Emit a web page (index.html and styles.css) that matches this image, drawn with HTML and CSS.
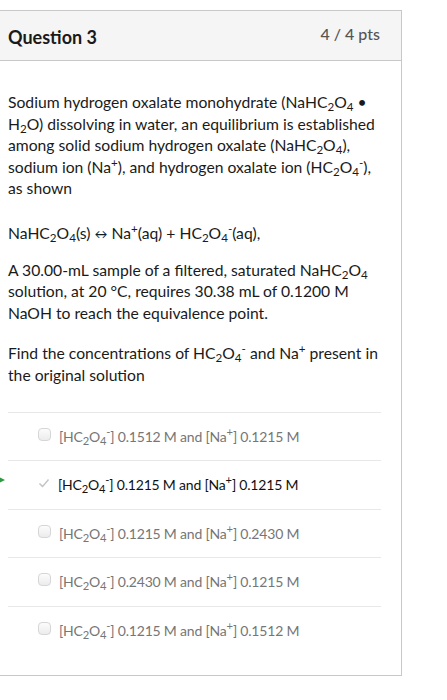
FILE: index.html
```html
<!DOCTYPE html>
<html>
<head>
<meta charset="utf-8">
<link rel="stylesheet" href="styles.css">
</head>
<body>
<div class="card">
  <div class="card-header">
    <span class="q-title">Question 3</span>
    <span class="q-pts">4 / 4 pts</span>
  </div>
  <div class="card-body">
    <p class="p-first">Sodium hydrogen oxalate monohydrate (NaHC<sub>2</sub>O<sub>4</sub> • H<sub>2</sub>O) dissolving in water, an equilibrium is established among solid sodium hydrogen oxalate (NaHC<sub>2</sub>O<sub>4</sub>), sodium ion (Na<sup>+</sup>), and hydrogen oxalate ion (HC<sub>2</sub>O<sub>4</sub><sup>-</sup>), as shown</p>
    <p class="p-eq">NaHC<sub>2</sub>O<sub>4</sub>(s) <span class="arrow">↔</span> Na<sup>+</sup>(aq) + HC<sub>2</sub>O<sub>4</sub><sup>-</sup>(aq),</p>
    <p class="p-mid">A 30.00-mL sample of a filtered, saturated NaHC<sub>2</sub>O<sub>4</sub> solution, at 20 °C, requires 30.38 mL of 0.1200 M NaOH to reach the equivalence point.</p>
    <p class="p-last">Find the concentrations of HC<sub>2</sub>O<sub>4</sub><sup>-</sup> and Na<sup>+</sup> present in the original solution</p>
    <ul class="answers">
      <li class="answer"><span class="radio"></span><span class="a-text">[HC<sub>2</sub>O<sub>4</sub><sup>-</sup>] 0.1512 M and [Na<sup>+</sup>] 0.1215 M</span></li>
      <li class="answer selected"><span class="correct-arrow"></span><span class="check"><svg width="12" height="12" viewBox="0 0 12 12"><path d="M1.5 6.5 L4.5 9.5 L10.5 2.5" fill="none" stroke="#c4c4c4" stroke-width="1.6" stroke-linejoin="round"/><path d="M3 6.2 L4.6 7.8 L9.2 2.6" fill="none" stroke="#fff" stroke-width="0.6"/></svg></span><span class="a-text">[HC<sub>2</sub>O<sub>4</sub><sup>-</sup>] 0.1215 M and [Na<sup>+</sup>] 0.1215 M</span></li>
      <li class="answer"><span class="radio"></span><span class="a-text">[HC<sub>2</sub>O<sub>4</sub><sup>-</sup>] 0.1215 M and [Na<sup>+</sup>] 0.2430 M</span></li>
      <li class="answer"><span class="radio"></span><span class="a-text">[HC<sub>2</sub>O<sub>4</sub><sup>-</sup>] 0.2430 M and [Na<sup>+</sup>] 0.1215 M</span></li>
      <li class="answer"><span class="radio"></span><span class="a-text">[HC<sub>2</sub>O<sub>4</sub><sup>-</sup>] 0.1215 M and [Na<sup>+</sup>] 0.1512 M</span></li>
    </ul>
  </div>
</div>
</body>
</html>
```

FILE: styles.css
```css
html, body {
  margin: 0;
  padding: 0;
  background: #fff;
}
body {
  font-family: Lato, "Open Sans", sans-serif;
  color: #2d3b45;
  padding-top: 10px;
}
.card {
  width: 402px;
  border: 1px solid #c8c8c8;
  border-left: none;
  position: relative;
  box-sizing: border-box;
}
.card-header {
  height: 50px;
  background: #f5f5f5;
  border-bottom: 1px solid #c8c8c8;
  display: flex;
  justify-content: space-between;
  align-items: center;
  padding: 0 21px 0 8px;
  box-sizing: border-box;
}
.q-title {
  font-size: 18px;
  font-weight: 700;
  color: #1a1a1a;
  margin-top: 3px;
}
.q-pts {
  font-size: 16px;
  font-weight: 500;
  color: #555;
  margin-top: -5px;
}
.card-body {
  padding: 31px 13px 21px 8px;
}
p {
  margin: 0 0 16px 0;
  font-size: 15.7px;
  line-height: 21.6px;
  color: #1a1a1a;
}
.p-first {
  margin-bottom: 23px;
}
.p-eq {
  margin-bottom: 14px;
}
.p-mid {
  margin-bottom: 19px;
}
.p-last {
  margin-bottom: 25px;
}
sub, sup {
  font-size: 0.74em;
  line-height: 0;
}
sub {
  vertical-align: -0.22em;
}
sup {
  vertical-align: 0.5em;
}
.arrow {
  font-size: 13px;
}
.answers {
  list-style: none;
  margin: 0;
  padding: 0;
  width: 373px;
}
.answer {
  height: 48.5px;
  border-top: 1px solid #e8e8e8;
  display: flex;
  align-items: center;
  padding-left: 30px;
  position: relative;
  font-size: 14px;
  color: #767676;
  letter-spacing: -0.2px;
  box-sizing: border-box;
}
.answer sup {
  font-size: 0.8em;
  vertical-align: 0.55em;
}
.answer sub {
  font-size: 0.8em;
  vertical-align: -0.3em;
}
.answer.selected {
  color: #111;
}
.radio {
  width: 11px;
  height: 11px;
  border: 1px solid #d6d6d6;
  border-radius: 4px;
  background: linear-gradient(#fcfcfc, #ececec);
  margin-right: 8px;
  margin-top: -4px;
}
.check {
  width: 13px;
  height: 12px;
  margin-right: 7px;
  margin-top: -4px;
  display: flex;
}
.correct-arrow {
  position: absolute;
  left: -13px;
  top: 14px;
  width: 0;
  height: 0;
  border-top: 5px solid transparent;
  border-bottom: 5px solid transparent;
  border-left: 10px solid #2e9a44;
}
```
